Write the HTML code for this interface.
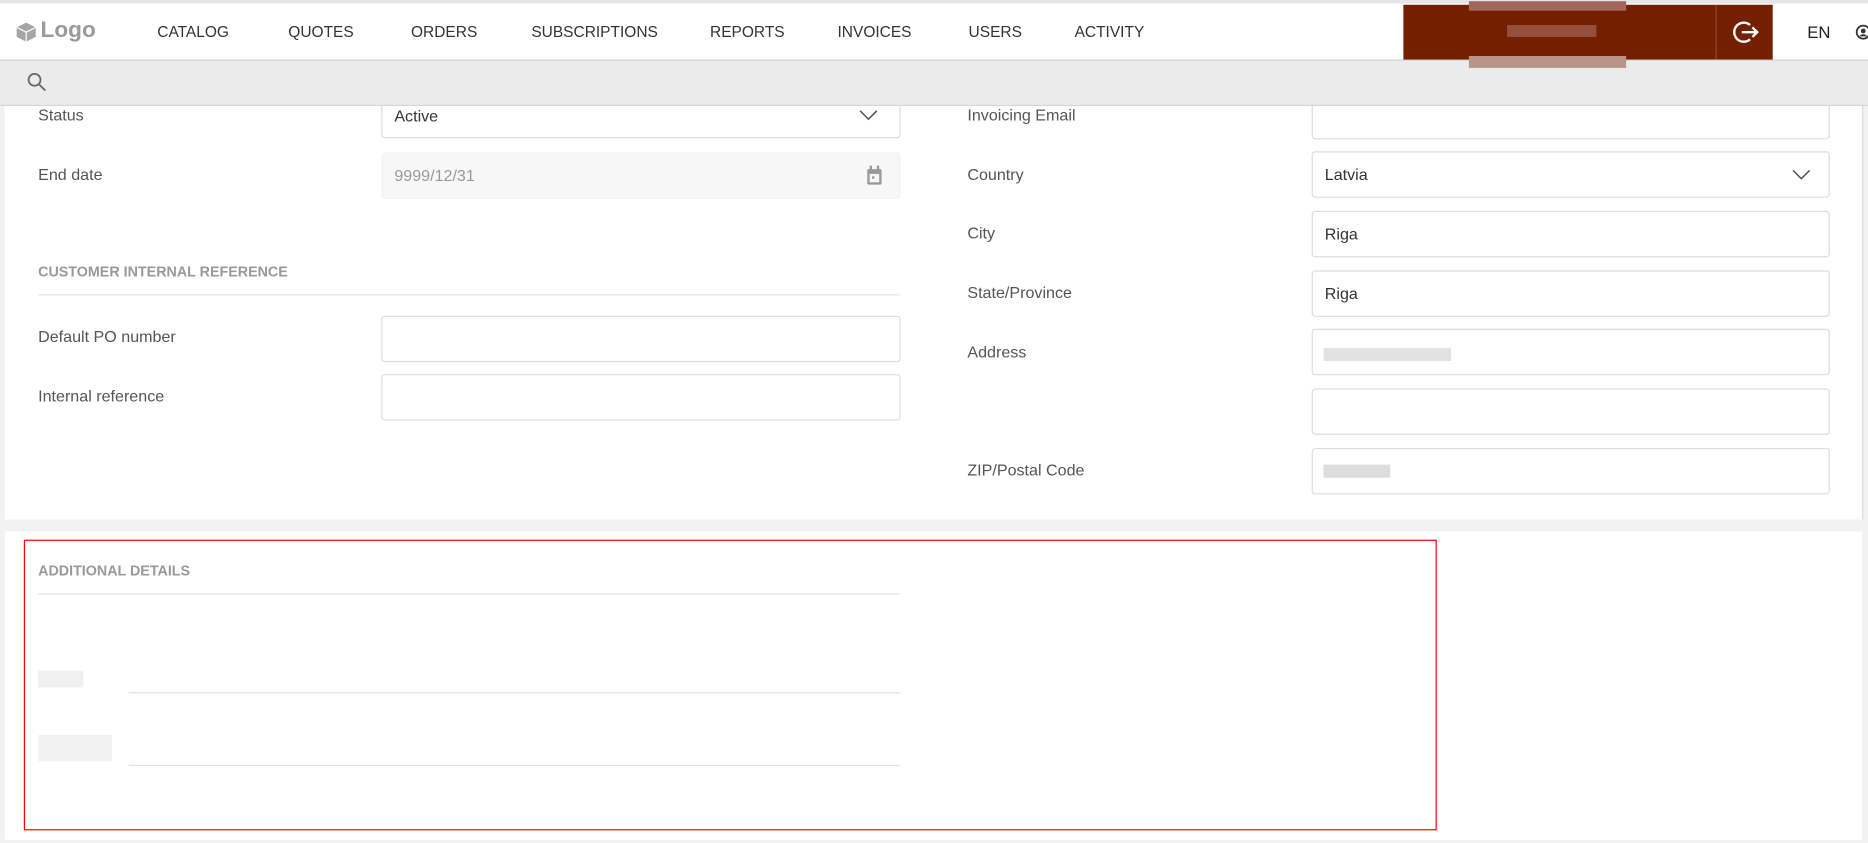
<!DOCTYPE html>
<html><head><meta charset="utf-8"><style>
html,body{margin:0;padding:0;width:1868px;height:843px;overflow:hidden;background:#f2f2f2}
#w{position:absolute;left:0;top:0;width:1568px;height:708px;transform:scale(1.19133);transform-origin:0 0;font-family:"Liberation Sans",sans-serif;color:#444}
.a{position:absolute}
.nav{font-size:13px;color:#333;top:19px}
.lbl{font-size:13.5px;color:#555}
.in{position:absolute;background:#fff;border:1px solid #ddd;border-radius:3px;box-sizing:border-box;height:39px}
.in span{position:absolute;left:10px;top:11px;font-size:13.5px;color:#333}
.sec{font-size:12px;font-weight:bold;color:#999}
.hr{position:absolute;height:1px;background:#e2e2e2}
</style></head><body><div id="w">
<div class="a" style="left:0;top:0;width:1568px;height:3px;background:#e6e6e6"></div>
<div class="a" style="left:0;top:3px;width:1568px;height:47px;background:#fff;border-bottom:1px solid #d0d0d0"></div>
<svg class="a" style="left:13px;top:18px" width="18" height="18" viewBox="0 0 18 18"><path d="M9 1L17 5V13L9 17L1 13V5Z" fill="#a5a5a5"/><path d="M1 5L9 9L17 5M9 9V17" stroke="#fff" stroke-width="1" fill="none"/></svg>
<div class="a" style="left:34px;top:15px;font-size:19px;font-weight:bold;color:#9a9a9a">Logo</div>
<div class="a nav" style="left:132px">CATALOG</div>
<div class="a nav" style="left:242px">QUOTES</div>
<div class="a nav" style="left:345px">ORDERS</div>
<div class="a nav" style="left:446px">SUBSCRIPTIONS</div>
<div class="a nav" style="left:596px">REPORTS</div>
<div class="a nav" style="left:703px">INVOICES</div>
<div class="a nav" style="left:813px">USERS</div>
<div class="a nav" style="left:902px">ACTIVITY</div>
<div class="a" style="left:0;top:51px;width:1568px;height:37px;background:#ebebeb;border-bottom:1px solid #d6d6d6"></div>
<div class="a" style="left:1178px;top:4px;width:310px;height:46px;background:#741f00"></div>
<div class="a" style="left:1440px;top:4px;width:1px;height:46px;background:#8e4a35"></div>
<div class="a" style="left:1233px;top:1px;width:132px;height:8px;background:#a0675a"></div>
<div class="a" style="left:1265px;top:21px;width:75px;height:10px;background:#94503d"></div>
<div class="a" style="left:1233px;top:47px;width:132px;height:10px;background:#b99489"></div>
<svg class="a" style="left:1454px;top:16px" width="24" height="22" viewBox="0 0 24 22"><path d="M15 5A8 8 0 1 0 15 17" stroke="#fff" stroke-width="2" fill="none"/><path d="M8 11H21M17 7L21 11L17 15" stroke="#fff" stroke-width="2" fill="none"/></svg>
<div class="a" style="left:1517px;top:19px;font-size:14px;color:#222">EN</div>
<svg class="a" style="left:1557px;top:20px" width="14" height="14"><circle cx="7" cy="7" r="5.5" stroke="#333" stroke-width="1.5" fill="none"/><circle cx="7" cy="6" r="2" fill="#333"/><path d="M3.5 10.5Q7 7 10.5 10.5" fill="#333"/></svg>
<svg class="a" style="left:22px;top:60px" width="18" height="18"><circle cx="7" cy="7" r="5" stroke="#666" stroke-width="1.5" fill="none"/><path d="M11 11L16 16" stroke="#666" stroke-width="1.5"/></svg>
<div class="a" style="left:4px;top:89px;width:1559px;height:347px;background:#fff;overflow:hidden">
 <div class="a lbl" style="left:28px;top:0px">Status</div>
 <div class="in" style="left:316px;top:-12px;width:436px"><span style="top:12px">Active</span><svg class="a" style="left:400px;top:14px" width="16" height="10"><path d="M1 1L8 8L15 1" stroke="#555" stroke-width="1.3" fill="none"/></svg></div>
 <div class="a lbl" style="left:28px;top:50px">End date</div>
 <div class="in" style="left:316px;top:39px;width:436px;background:#f7f7f7;border-color:#f3f3f3"><span style="color:#999">9999/12/31</span><svg class="a" style="left:406px;top:10px" width="14" height="17"><rect x="1" y="3" width="12" height="13" rx="1" fill="#999"/><rect x="3" y="7" width="8" height="7" fill="#f7f7f7"/><rect x="3" y="0" width="2" height="4" fill="#999"/><rect x="9" y="0" width="2" height="4" fill="#999"/><rect x="5" y="9" width="2" height="2" fill="#999"/></svg></div>
 <div class="a sec" style="left:28px;top:132px">CUSTOMER INTERNAL REFERENCE</div>
 <div class="hr" style="left:28px;top:158px;width:723px"></div>
 <div class="a lbl" style="left:28px;top:186px">Default PO number</div>
 <div class="in" style="left:316px;top:176px;width:436px"></div>
 <div class="a lbl" style="left:28px;top:236px">Internal reference</div>
 <div class="in" style="left:316px;top:225px;width:436px"></div>
 <div class="a lbl" style="left:808px;top:0px">Invoicing Email</div>
 <div class="in" style="left:1097px;top:-11px;width:435px"></div>
 <div class="a lbl" style="left:808px;top:50px">Country</div>
 <div class="in" style="left:1097px;top:38px;width:435px"><span>Latvia</span><svg class="a" style="left:402px;top:14px" width="16" height="10"><path d="M1 1L8 8L15 1" stroke="#555" stroke-width="1.3" fill="none"/></svg></div>
 <div class="a lbl" style="left:808px;top:99px">City</div>
 <div class="in" style="left:1097px;top:88px;width:435px"><span>Riga</span></div>
 <div class="a lbl" style="left:808px;top:149px">State/Province</div>
 <div class="in" style="left:1097px;top:138px;width:435px"><span>Riga</span></div>
 <div class="a lbl" style="left:808px;top:199px">Address</div>
 <div class="in" style="left:1097px;top:187px;width:435px"><div class="a" style="left:9px;top:15px;width:107px;height:11px;background:#e2e2e2"></div></div>
 <div class="in" style="left:1097px;top:237px;width:435px"></div>
 <div class="a lbl" style="left:808px;top:298px">ZIP/Postal Code</div>
 <div class="in" style="left:1097px;top:287px;width:435px"><div class="a" style="left:9px;top:13px;width:56px;height:11px;background:#ddd"></div></div>
</div>
<div class="a" style="left:1563px;top:89px;width:1px;height:347px;background:#ddd"></div>
<div class="a" style="left:4px;top:446px;width:1559px;height:259px;background:#fff"></div>
<div class="a" style="left:20px;top:453px;width:1186px;height:244px;border:1.5px solid #f00;box-sizing:border-box"></div>
<div class="a sec" style="left:32px;top:472px">ADDITIONAL DETAILS</div>
<div class="hr" style="left:32px;top:498px;width:723px"></div>
<div class="a" style="left:32px;top:563px;width:38px;height:14px;background:#f0f0f0"></div>
<div class="hr" style="left:108px;top:581px;width:647px"></div>
<div class="a" style="left:32px;top:617px;width:62px;height:22px;background:#f2f2f2"></div>
<div class="hr" style="left:108px;top:642px;width:647px"></div>
</div></body></html>
